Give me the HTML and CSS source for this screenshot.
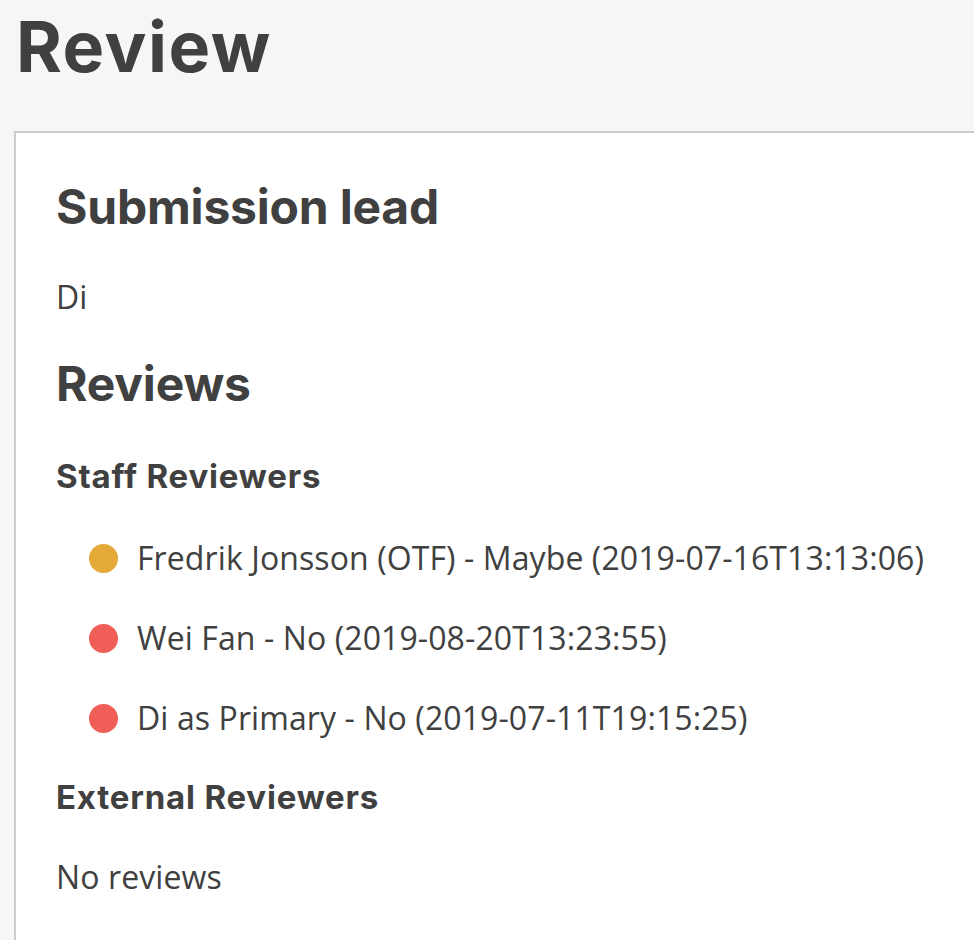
FILE: index.html
```html
<!DOCTYPE html>
<html lang="en">
<head>
<meta charset="utf-8">
<title>Review</title>
<link rel="stylesheet" href="styles.css">
</head>
<body>
<h1 class="page-title">Review</h1>
<section class="panel">
  <h2 class="section-title">Submission lead</h2>
  <p class="text">Di</p>
  <h2 class="section-title reviews-title">Reviews</h2>
  <h4 class="group-title">Staff Reviewers</h4>
  <ul class="review-list">
    <li class="review-item"><span class="dot dot-maybe"></span><span>Fredrik Jonsson (OTF) - Maybe (2019-07-16T13:13:06)</span></li>
    <li class="review-item"><span class="dot dot-no"></span><span>Wei Fan - No (2019-08-20T13:23:55)</span></li>
    <li class="review-item"><span class="dot dot-no"></span><span>Di as Primary - No (2019-07-11T19:15:25)</span></li>
  </ul>
  <h4 class="group-title external-title">External Reviewers</h4>
  <p class="text no-reviews">No reviews</p>
</section>
</body>
</html>
```
FILE: styles.css
```css
html, body {
  margin: 0;
  padding: 0;
}
body {
  background: #f6f6f6;
  color: #404040;
  font-family: "Open Sans", "Noto Sans", sans-serif;
  font-size: 32px;
  overflow: hidden;
}
.page-title {
  font-family: Inter, "Liberation Sans", sans-serif;
  font-weight: 700;
  font-size: 70px;
  line-height: 80px;
  margin: 0;
  padding: 7px 0 0 16px;
  letter-spacing: 1.5px;
}
.panel {
  box-sizing: border-box;
  margin: 44px 0 0 14px;
  background: #fff;
  border-top: 2px solid #cccccc;
  border-left: 2px solid #cccccc;
  padding: 44px 0 16px 40px;
  min-height: 809px;
}
.section-title {
  font-family: Inter, "Liberation Sans", sans-serif;
  font-weight: 700;
  font-size: 48px;
  line-height: 60px;
  margin: 0;
  letter-spacing: -0.2px;
}
.text {
  margin: 36px 0 0;
  line-height: 48px;
  letter-spacing: 0.1px;
}
.reviews-title {
  margin-top: 33px;
}
.group-title {
  font-family: Inter, "Liberation Sans", sans-serif;
  font-weight: 700;
  font-size: 33px;
  line-height: 44px;
  margin: 40px 0 0;
  letter-spacing: 0.8px;
}
.review-list {
  list-style: none;
  margin: 36px 0 0;
  padding: 0 0 0 33px;
  display: flex;
  flex-direction: column;
  gap: 32px;
}
.review-item {
  display: flex;
  align-items: center;
  gap: 19px;
  line-height: 48px;
  letter-spacing: 0.1px;
}
.dot {
  width: 29px;
  height: 29px;
  border-radius: 50%;
  flex: none;
}
.dot-maybe {
  background: #e5a938;
}
.dot-no {
  background: #ef5f58;
}
.external-title {
  margin-top: 33px;
}
.no-reviews {
  margin-top: 34px;
}
```
